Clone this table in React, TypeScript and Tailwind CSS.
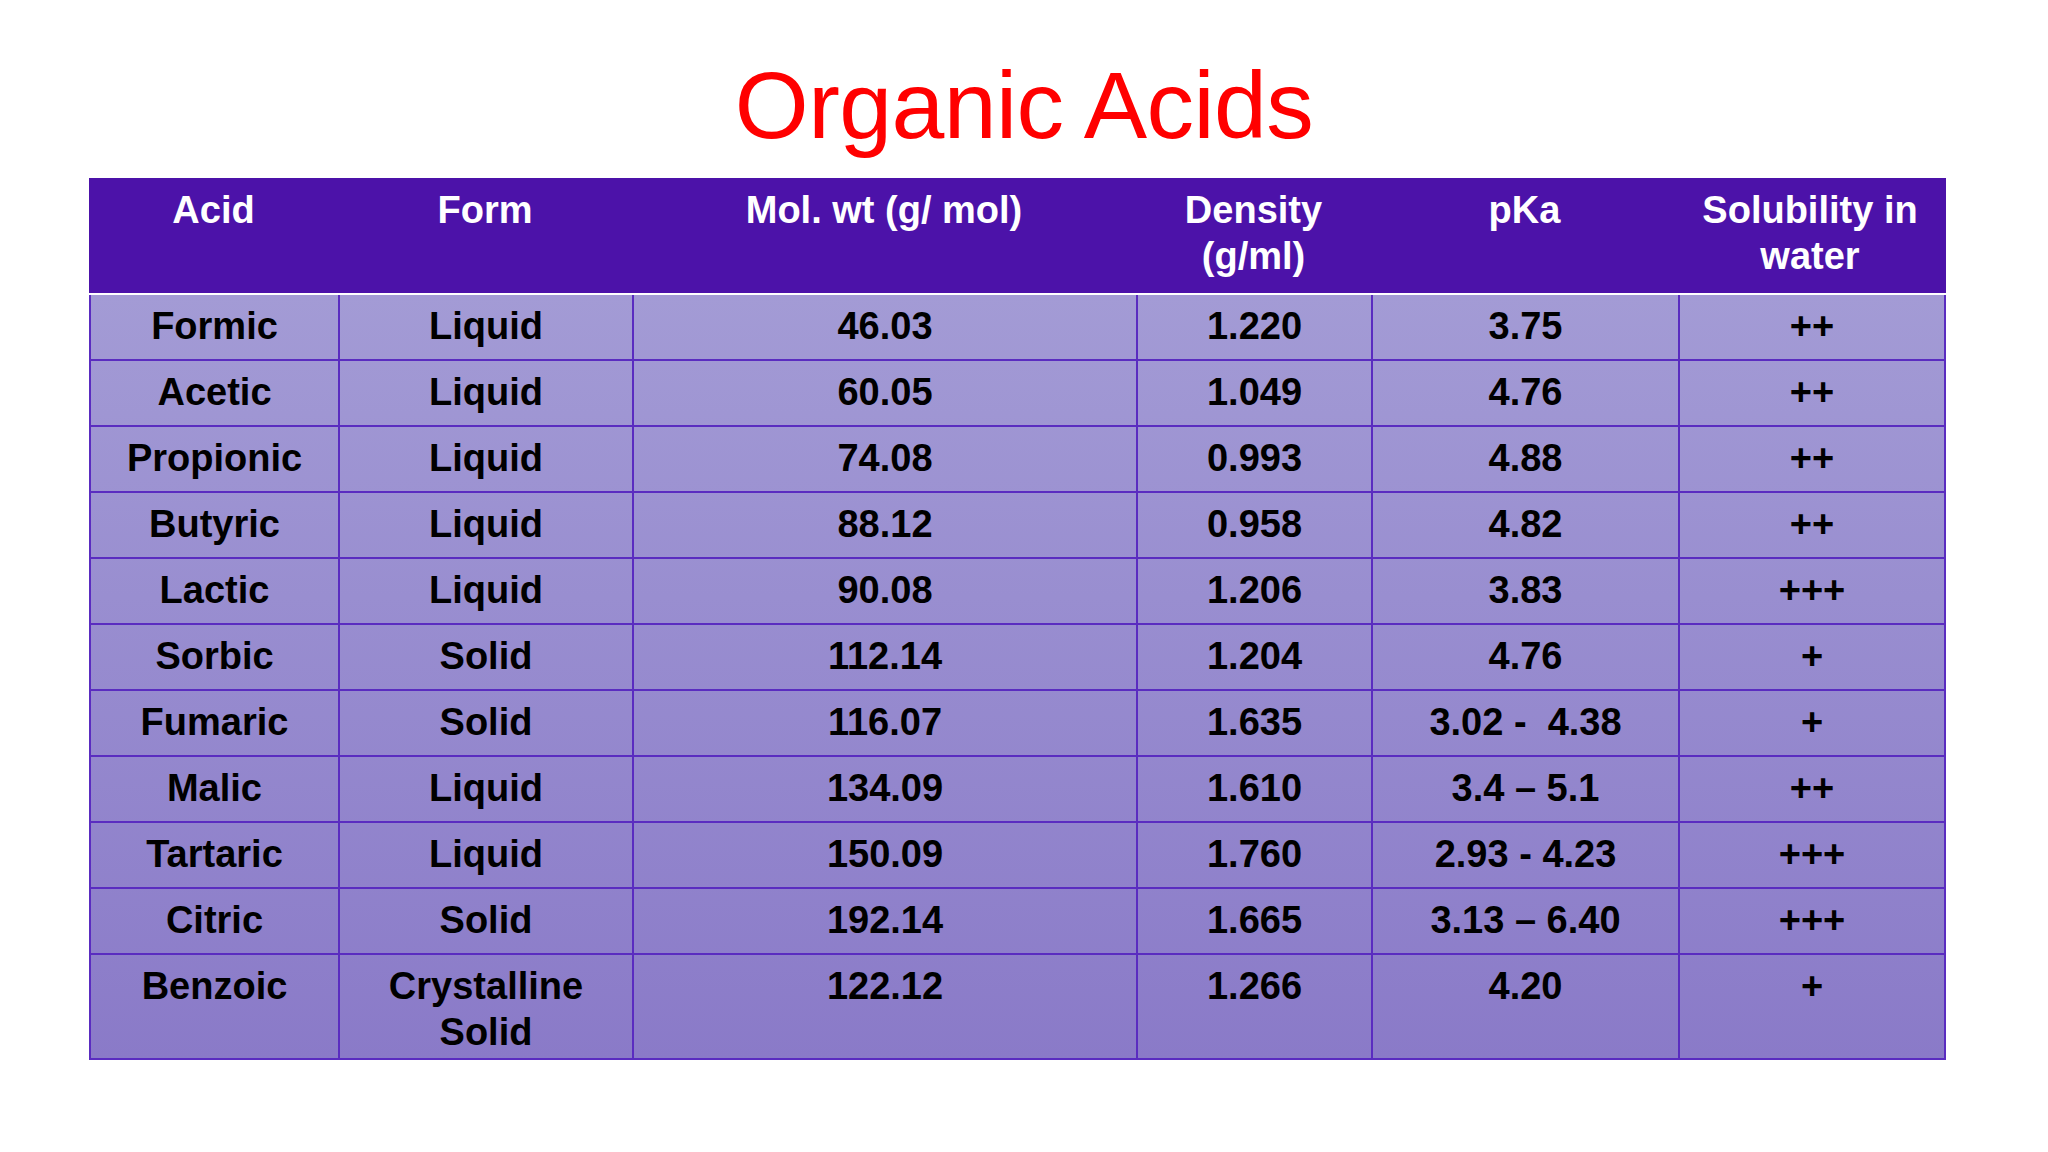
const headers = ["Acid", "Form", "Mol. wt (g/ mol)", "Density\n(g/ml)", "pKa", "Solubility in\nwater"];

const rows: string[][] = [
  ["Formic", "Liquid", "46.03", "1.220", "3.75", "++"],
  ["Acetic", "Liquid", "60.05", "1.049", "4.76", "++"],
  ["Propionic", "Liquid", "74.08", "0.993", "4.88", "++"],
  ["Butyric", "Liquid", "88.12", "0.958", "4.82", "++"],
  ["Lactic", "Liquid", "90.08", "1.206", "3.83", "+++"],
  ["Sorbic", "Solid", "112.14", "1.204", "4.76", "+"],
  ["Fumaric", "Solid", "116.07", "1.635", "3.02 -  4.38", "+"],
  ["Malic", "Liquid", "134.09", "1.610", "3.4 – 5.1", "++"],
  ["Tartaric", "Liquid", "150.09", "1.760", "2.93 - 4.23", "+++"],
  ["Citric", "Solid", "192.14", "1.665", "3.13 – 6.40", "+++"],
  ["Benzoic", "Crystalline\nSolid", "122.12", "1.266", "4.20", "+"],
];

const cols = "grid grid-cols-[249px_294px_504px_235px_307px_264px]";

export default function App() {
  return (
    <div className="w-[2048px] h-[1152px] bg-white font-['Liberation_Sans',Arial,sans-serif]">
      <h1 className="pt-[58px] text-center text-[95px] leading-none font-normal text-[#ff0000] tracking-[-0.6px]">
        Organic Acids
      </h1>
      <div className="ml-[89px] mt-[25px] w-[1857px]">
        {/* header */}
        <div className={`${cols} h-[115px] bg-[#4c12a9] pt-[9px] text-white`}>
          {headers.map((h) => (
            <div key={h} className="whitespace-pre-line text-center text-[38px] font-bold leading-[46px]">
              {h}
            </div>
          ))}
        </div>
        <div className="h-[2px] bg-white" />
        {/* body */}
        <div className="border-x-2 border-[#5a2cc0] bg-gradient-to-b from-[#a39bd5] to-[#8a7ac8]">
          {rows.map((r, i) => (
            <div key={r[0]} className={`${cols} ${i === rows.length - 1 ? "h-[105px]" : "h-[66px]"} border-b-2 border-[#5a2cc0]`}>
              {r.map((c, j) => (
                <div
                  key={j}
                  className={`whitespace-pre-wrap pt-[8px] text-center text-[38px] font-bold leading-[46px] text-black ${j < 5 ? "border-r-2 border-[#5a2cc0]" : ""}`}
                >
                  {c}
                </div>
              ))}
            </div>
          ))}
        </div>
      </div>
    </div>
  );
}
